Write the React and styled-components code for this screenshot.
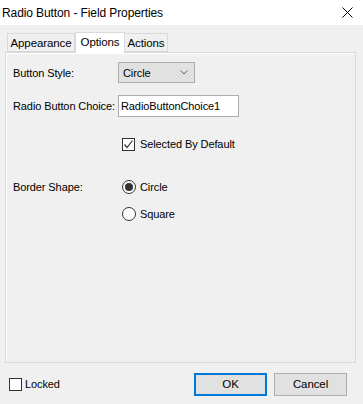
import React from "react";
import styled, { createGlobalStyle } from "styled-components";

const Global = createGlobalStyle`
  html, body { margin: 0; padding: 0; background: #f0f0f0; }
  body { font-family: "Segoe UI", "Liberation Sans", "Noto Sans", sans-serif; font-size: 11px; letter-spacing: -0.1px; color: #000; }
  * { box-sizing: border-box; }
`;

const Dialog = styled.div`
  width: 363px;
  height: 404px;
  display: flex;
  flex-direction: column;
  background: #f0f0f0;
  overflow: hidden;
  white-space: nowrap;
`;

const TitleBar = styled.div`
  height: 25px;
  background: #fff;
  display: flex;
  align-items: center;
  justify-content: space-between;
  padding: 0 8px 0 2px;
  font-size: 12px;
  letter-spacing: -0.1px;
`;

const CloseBtn = styled.div`
  width: 12px;
  height: 12px;
  display: flex;
  align-items: center;
  justify-content: center;
  margin-right: 2px;
`;

const TabStrip = styled.div`
  display: flex;
  align-items: flex-end;
  margin: 7px 0 0 7px;
  height: 20px;
  position: relative;
  z-index: 1;
`;

const Tab = styled.div`
  width: ${(p) => p.$w}px;
  height: ${(p) => (p.$active ? "21px" : "19px")};
  margin-bottom: ${(p) => (p.$active ? "-1px" : "0")};
  border: 1px solid #d9d9d9;
  border-bottom: ${(p) => (p.$active ? "none" : "1px solid #d9d9d9")};
  border-left: ${(p) => (p.$first || p.$active ? "1px solid #d9d9d9" : "none")};
  background: ${(p) => (p.$active ? "#fff" : "#f0f0f0")};
  display: flex;
  align-items: center;
  justify-content: center;
  padding-top: ${(p) => (p.$active ? "0" : "2px")};
  font-size: 11.5px;
  line-height: 1;
`;

const Panel = styled.div`
  margin: 0 7px 0 5px;
  height: 311px;
  border: 1px solid #d9d9d9;
  box-shadow: inset 1px 1px 0 #fff;
  padding: 9px 0 0 7px;
  display: flex;
  flex-direction: column;
`;

const Row = styled.div`
  display: flex;
  align-items: center;
  height: ${(p) => p.$h || 22}px;
  margin-top: ${(p) => p.$mt || 0}px;
`;

const Label = styled.div`
  width: 105px;
  flex-shrink: 0;
`;

const Select = styled.div`
  width: 77px;
  height: 21px;
  background: #e1e1e1;
  border: 1px solid #adadad;
  display: flex;
  align-items: center;
  justify-content: space-between;
  padding: 0 6px 0 4px;
`;

const TextInput = styled.div`
  width: 121px;
  height: 22px;
  background: #fff;
  border: 1px solid #adadad;
  display: flex;
  align-items: center;
  padding-left: 2px;
`;

const Check = styled.div`
  width: 13px;
  height: 13px;
  border: 1px solid #333;
  background: #fff;
  display: flex;
  align-items: center;
  justify-content: center;
  margin-right: 5px;
`;

const Radio = styled.div`
  width: 14px;
  height: 14px;
  border: 1px solid #333;
  border-radius: 50%;
  background: #fff;
  display: flex;
  align-items: center;
  justify-content: center;
  margin-right: 4px;
`;

const Dot = styled.div`
  width: 8px;
  height: 8px;
  border-radius: 50%;
  background: #333;
`;

const Indent = styled.div`
  padding-left: 109px;
  display: flex;
  align-items: center;
`;

const Footer = styled.div`
  flex: 1;
  display: flex;
  align-items: center;
  justify-content: space-between;
  padding: 1px 16px 0 9px;
`;

const Buttons = styled.div`
  display: flex;
  gap: 7px;
`;

const Button = styled.div`
  width: 73px;
  height: 23px;
  background: #e1e1e1;
  border: ${(p) => (p.$default ? "2px solid #0078d7" : "1px solid #adadad")};
  display: flex;
  align-items: center;
  justify-content: center;
  font-size: 11.5px;
`;

const Inline = styled.div`
  display: flex;
  align-items: center;
`;

export default function App() {
  return (
    <Dialog>
      <Global />
      <TitleBar>
        <span>Radio Button - Field Properties</span>
        <CloseBtn>
          <svg width="11" height="11" viewBox="0 0 11 11">
            <path d="M0.5 0.5 L10.5 10.5 M10.5 0.5 L0.5 10.5" stroke="#000" strokeWidth="1" />
          </svg>
        </CloseBtn>
      </TitleBar>
      <TabStrip>
        <Tab $first $w={68}>Appearance</Tab>
        <Tab $active $w={50}>Options</Tab>
        <Tab $w={43}>Actions</Tab>
      </TabStrip>
      <Panel>
        <Row $h={21}>
          <Label>Button Style:</Label>
          <Select>
            <span>Circle</span>
            <svg width="8" height="5" viewBox="0 0 8 5">
              <path d="M0.5 0.5 L4 4 L7.5 0.5" fill="none" stroke="#606060" strokeWidth="1" />
            </svg>
          </Select>
        </Row>
        <Row $mt={12}>
          <Label>Radio Button Choice:</Label>
          <TextInput>RadioButtonChoice1</TextInput>
        </Row>
        <Row $mt={17} $h={20}>
          <Indent>
            <Check>
              <svg width="11" height="11" viewBox="0 0 11 11">
                <path d="M1.5 5.5 L4 8.5 L9.5 1.5" fill="none" stroke="#333" strokeWidth="1.2" />
              </svg>
            </Check>
            <span>Selected By Default</span>
          </Indent>
        </Row>
        <Row $mt={23} $h={20}>
          <Label>Border Shape:</Label>
          <Inline style={{ paddingLeft: 4 }}>
            <Radio><Dot /></Radio>
            <span>Circle</span>
          </Inline>
        </Row>
        <Row $mt={7} $h={20}>
          <Indent>
            <Radio />
            <span>Square</span>
          </Indent>
        </Row>
      </Panel>
      <Footer>
        <Inline>
          <Check />
          <span style={{ marginLeft: -2 }}>Locked</span>
        </Inline>
        <Buttons>
          <Button $default>OK</Button>
          <Button>Cancel</Button>
        </Buttons>
      </Footer>
    </Dialog>
  );
}
